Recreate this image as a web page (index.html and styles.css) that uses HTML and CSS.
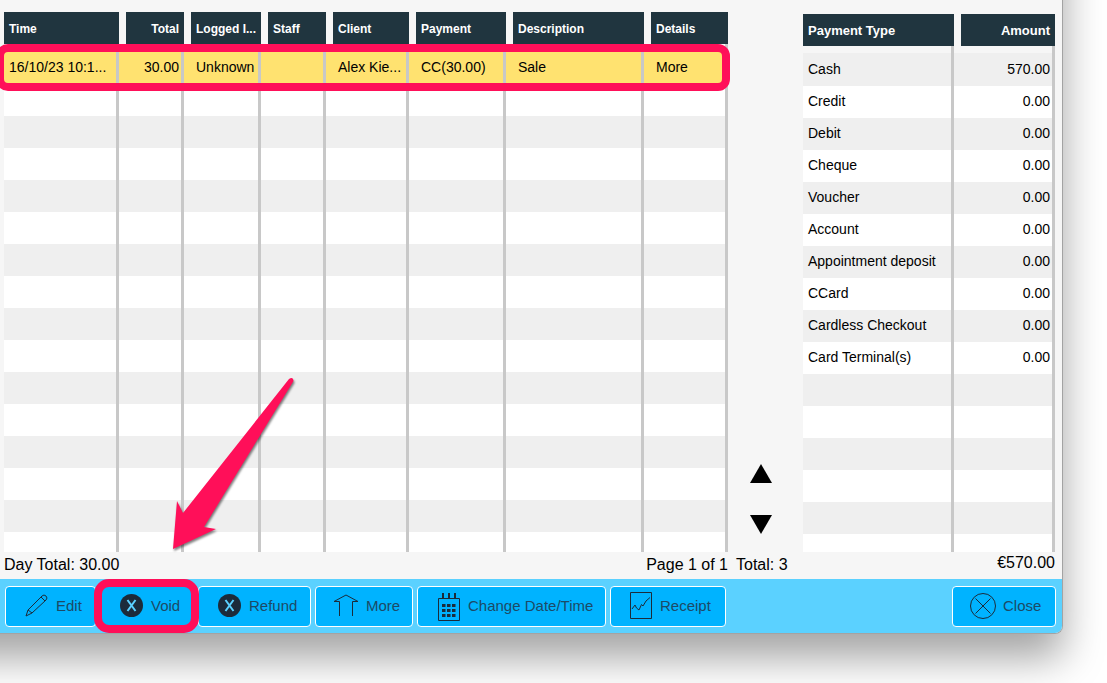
FILE: index.html
```
<!DOCTYPE html>
<html lang="en">
<head>
<meta charset="utf-8">
<title>Day Total</title>
<link rel="stylesheet" href="styles.css">
<script src="rows.js" defer></script>
</head>
<body>
<div class="window">
  <main class="content">
    <section class="sales">
      <div class="clip">
        <table class="grid">
          <colgroup><col class="w-time"><col class="w-total"><col class="w-logged"><col class="w-staff"><col class="w-client"><col class="w-payment"><col><col class="w-details"></colgroup>
          <thead>
            <tr><th>Time</th><th class="num">Total</th><th>Logged I...</th><th>Staff</th><th>Client</th><th>Payment</th><th>Description</th><th>Details</th></tr>
          </thead>
          <tbody data-rows="16">
            <tr class="spacer"><td></td><td></td><td></td><td></td><td></td><td></td><td></td><td></td></tr>
            <tr class="selected"><td>16/10/23 10:1...</td><td class="num">30.00</td><td>Unknown</td><td></td><td>Alex Kie...</td><td>CC(30.00)</td><td>Sale</td><td>More</td></tr>
          </tbody>
        </table>
      </div>
      <div class="mark mark-row"></div>
      <svg class="arrow" width="130" height="184" viewBox="168 372 130 184" aria-hidden="true"><path d="M289 379Q293 376 293.500 381L204 527L216 529L173 549L177 501L183 513Z" fill="#ff0f59"/></svg>
    </section>
    <nav class="pager">
      <button type="button" aria-label="Previous page"><svg width="22" height="19" viewBox="0 0 22 19"><path d="M11 0L22 19H0Z"/></svg></button>
      <button type="button" aria-label="Next page"><svg width="22" height="19" viewBox="0 0 22 19"><path d="M0 0H22L11 19Z"/></svg></button>
    </nav>
    <section class="payments">
      <div class="clip">
        <table class="grid">
          <colgroup><col class="w-type"><col></colgroup>
          <thead><tr><th>Payment Type</th><th class="num">Amount</th></tr></thead>
          <tbody data-rows="16">
            <tr class="spacer"><td></td><td></td></tr>
            <tr><td>Cash</td><td class="num">570.00</td></tr>
            <tr><td>Credit</td><td class="num">0.00</td></tr>
            <tr><td>Debit</td><td class="num">0.00</td></tr>
            <tr><td>Cheque</td><td class="num">0.00</td></tr>
            <tr><td>Voucher</td><td class="num">0.00</td></tr>
            <tr><td>Account</td><td class="num">0.00</td></tr>
            <tr><td>Appointment deposit</td><td class="num">0.00</td></tr>
            <tr><td>CCard</td><td class="num">0.00</td></tr>
            <tr><td>Cardless Checkout</td><td class="num">0.00</td></tr>
            <tr><td>Card Terminal(s)</td><td class="num">0.00</td></tr>
          </tbody>
        </table>
      </div>
    </section>
  </main>
  <div class="status">
    <span class="day">Day Total: 30.00</span>
    <span>Page 1 of 1</span>
    <span class="count">Total: 3</span>
    <span class="sum">€570.00</span>
  </div>
  <footer class="toolbar">
    <button type="button" class="btn b-edit"><svg width="23" height="23" viewBox="0 0 23 23"><path d="M1 22L3 16L17 2Q19 0 21 2Q23 4 21 6L7 19ZM3 16L7 19M16 3L20 7"/></svg><span>Edit</span></button>
    <div class="void">
      <button type="button" class="btn b-void"><svg width="23" height="23" viewBox="0 0 23 23"><circle class="disc" cx="11.500" cy="11.500" r="11.500"/><path class="cross" d="M7.500 6L15.500 17M15.500 6L7.500 17"/></svg><span>Void</span></button>
      <div class="mark mark-void"></div>
    </div>
    <button type="button" class="btn b-refund"><svg width="23" height="23" viewBox="0 0 23 23"><circle class="disc" cx="11.500" cy="11.500" r="11.500"/><path class="cross" d="M7.500 6L15.500 17M15.500 6L7.500 17"/></svg><span>Refund</span></button>
    <button type="button" class="btn b-more"><svg width="26" height="23" viewBox="0 0 26 23"><path d="M6.500 22V7.500H1L13 1L25 7.500H19.500V22"/></svg><span>More</span></button>
    <button type="button" class="btn b-date"><svg width="22" height="29" viewBox="0 0 22 29"><path d="M.5 6.500H21.500V28.500H.5Z"/><path class="thick" d="M5 1V7M11 1V7M17 1V7"/><path class="dots" d="M4 13.500H18M4 18.500H18M4 23.500H18"/></svg><span>Change Date/Time</span></button>
    <button type="button" class="btn b-receipt"><svg width="22" height="27" viewBox="0 0 22 27"><path d="M.5 .5H21.500V26.500H.5Z"/><path d="M2 17L5 13L6.500 16L9 18L11.500 12.500L13 14L16 9L20 5.500"/></svg><span>Receipt</span></button>
    <button type="button" class="btn b-close"><svg width="26" height="26" viewBox="0 0 26 26"><circle cx="13" cy="13" r="12.500"/><path d="M5.500 5.500L20.500 20.500M20.500 5.500L5.500 20.500"/></svg><span>Close</span></button>
  </footer>
</div>
</body>
</html>
```
FILE: styles.css
```
* { box-sizing: border-box; }
body {
  margin: 0;
  height: 100vh;
  overflow: hidden;
  background: #fff;
  color: #000;
  font-family: "Liberation Sans", Arial, sans-serif;
  font-size: 14px;
}
/* The window runs past the top and left edges of the page. */
.window {
  display: flex;
  flex-direction: column;
  height: calc(100vh + 31px);
  margin: -80px 44px 0 -80px;
  padding: 80px 0 0 80px;
  background: #f6f6f6;
  border: solid #a3a3a3;
  border-width: 0 1px 1px 0;
  border-radius: 0 0 8px 0;
  box-shadow: 0 24px 40px rgba(0, 0, 0, .36);
}
.content { flex: 1; min-height: 0; display: flex; padding: 12px 7px 0 4px; }
.sales { position: relative; flex: 1; min-width: 0; }
.clip { height: 100%; overflow: hidden; }
.pager {
  display: flex;
  flex-direction: column;
  align-items: center;
  justify-content: flex-end;
  gap: 32px;
  width: 75px;
  padding: 0 9px 18px 0;
}
.pager button { display: block; padding: 0; border: 0; background: none; }
.pager svg { display: block; fill: #000; }
.payments { width: 252px; padding-top: 2px; }

.grid { width: 100%; table-layout: fixed; border-collapse: separate; border-spacing: 0; }
.w-time { width: 115px; }
.w-total { width: 65px; }
.w-logged { width: 77px; }
.w-staff { width: 65px; }
.w-client { width: 83px; }
.w-payment { width: 97px; }
.w-details { width: 84px; }
.w-type { width: 151px; }
.grid th {
  height: 32px;
  padding: 2px 5px 0;
  background: #20353f;
  color: #fff;
  font-size: 12px;
  text-align: left;
  white-space: nowrap;
}
.payments .grid th { padding-top: 0; font-size: 13px; }
.grid th + th { border-left: 7px solid #f6f6f6; }
.grid td {
  height: 32px;
  padding: 0 2px 2px 5px;
  border-right: 3px solid #c8c8c8;
  background: #fff;
  line-height: 16px;
  white-space: nowrap;
}
.grid td + td { padding-left: 12px; }
.grid tr:nth-child(even) td { background: #efefef; }
.grid tr:nth-child(2) td { height: 33px; }
.grid .spacer td { height: 7px; padding: 0; background: #f6f6f6; }
.grid tr.selected td { background: #ffe270; }
.grid .num { text-align: right; }

.mark { position: absolute; border: 8px solid #ff0f59; pointer-events: none; }
.mark-row { top: 32px; left: -8px; right: -2px; height: 47px; border-radius: 12px; }
.mark-void { inset: -7px -5px -6px -6px; border-radius: 15px; }
.arrow {
  position: absolute;
  left: 164px;
  top: 360px;
  filter: drop-shadow(1px 2px 1px rgba(0, 0, 0, .5));
}

.status { display: flex; height: 27px; padding: 0 7px 0 4px; font-size: 16px; line-height: 26px; }
.day { flex: 1; }
.count { width: 75px; padding-left: 8px; }
.sum { width: 252px; line-height: 22px; text-align: right; }

.toolbar {
  display: flex;
  gap: 4px;
  padding: 7px 6px 6px 5px;
  background: #5bd1ff;
  border-radius: 0 0 7px 0;
}
.btn {
  display: flex;
  align-items: center;
  height: 41px;
  padding: 0 0 2px 19px;
  gap: 8px;
  border: 1px solid #fff;
  border-radius: 4px;
  background: #00b3ff;
  color: #1d4a66;
  font: 15px "Liberation Sans", Arial, sans-serif;
  white-space: nowrap;
}
.btn svg { flex: none; fill: none; stroke: #1c2b3a; stroke-width: 1; }
.btn .disc { fill: #1c2b3a; stroke: none; }
.btn .cross { stroke: #5bd1ff; stroke-width: 2; }
.btn .thick { stroke-width: 2; }
.btn .dots { stroke-width: 3; stroke-dasharray: 3.5 1.5; }
.void { position: relative; }
.b-edit { width: 91px; }
.b-void { width: 94px; }
.b-refund { width: 113px; }
.b-more { width: 98px; padding-left: 17px; gap: 7px; }
.b-date { width: 189px; padding: 0 0 0 20px; }
.b-date span { padding-bottom: 2px; }
.b-receipt { width: 116px; }
.b-close { width: 104px; margin-left: auto; padding-left: 17px; gap: 7px; }
```
FILE: rows.js
```
// Fill each table with blank striped rows down to its row count.
document.querySelectorAll("tbody[data-rows]").forEach(function (body) {
  var columns = body.rows[0].cells.length;
  while (body.rows.length - 1 < Number(body.dataset.rows)) {
    var row = body.insertRow();
    for (var i = 0; i < columns; i++) row.insertCell();
  }
});
```
